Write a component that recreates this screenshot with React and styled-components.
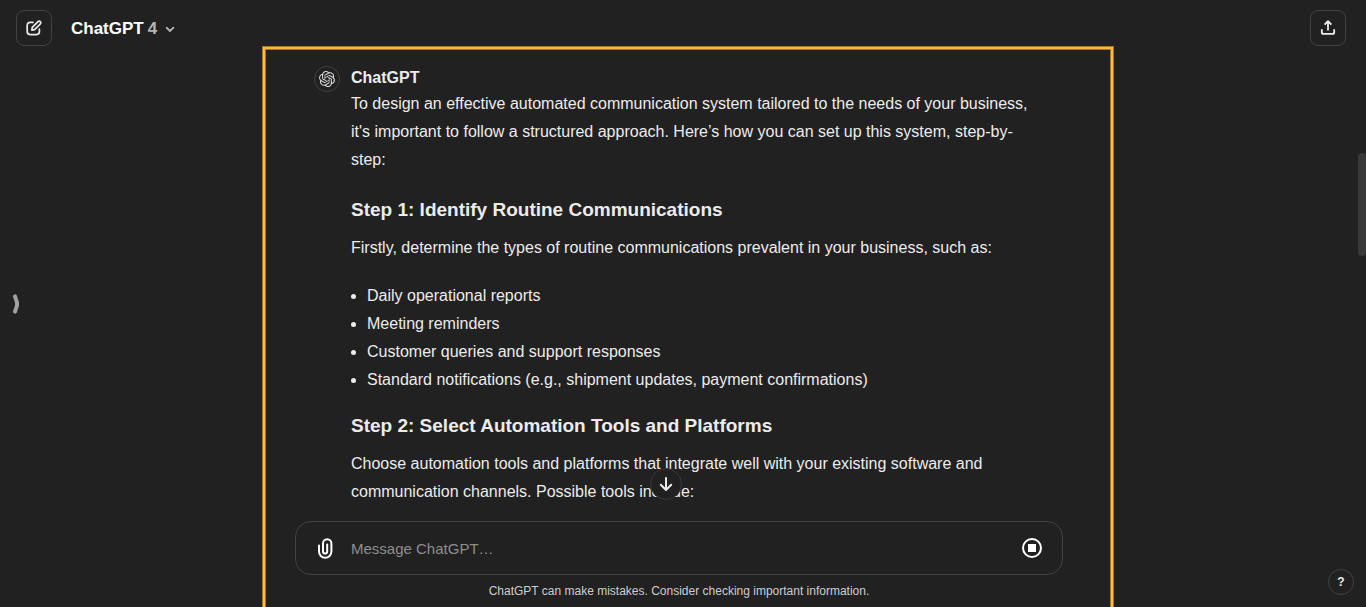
import React from 'react'
import styled, { createGlobalStyle } from 'styled-components'
import { SiOpenai } from 'react-icons/si'

const routine = [
  'Daily operational reports',
  'Meeting reminders',
  'Customer queries and support responses',
  'Standard notifications (e.g., shipment updates, payment confirmations)',
]

const EditIcon = () => (
  <svg width='18' height='18' viewBox='0 0 18 18' fill='none' stroke='currentColor' strokeWidth='1.7'>
    <path d='M8 3.4H5.2C3.2 3.4 2.2 4.4 2.2 6.4v6.2c0 2 1 3 3 3h6.2c2 0 3-1 3-3V10' strokeLinecap='round' />
    <path d='M6.8 11.2l.5-2.8 5.7-5.7a1.6 1.6 0 0 1 2.3 2.3l-5.7 5.7z' strokeLinejoin='round' />
  </svg>
)

const ShareIcon = () => (
  <svg width='18' height='18' viewBox='0 0 18 18' fill='none' stroke='currentColor' strokeWidth='1.8' strokeLinecap='round' strokeLinejoin='round'>
    <path d='M9 10.8V2.8M6.2 5L9 2.2 11.8 5' />
    <path d='M2.8 10.8v2.4c0 1.1.6 1.7 1.7 1.7h9c1.1 0 1.7-.6 1.7-1.7v-2.4' />
  </svg>
)

const ChevronIcon = () => (
  <svg width='10' height='8' viewBox='0 0 10 8' fill='none' stroke='currentColor' strokeWidth='1.8' strokeLinecap='round' strokeLinejoin='round'>
    <path d='M1.6 2.6L5 6l3.4-3.4' />
  </svg>
)

const ArrowDownIcon = () => (
  <svg width='16' height='16' viewBox='0 0 16 16' fill='none' stroke='currentColor' strokeWidth='2' strokeLinecap='round' strokeLinejoin='round'>
    <path d='M8 2v12M2.8 8.8L8 14l5.2-5.2' />
  </svg>
)

const ClipIcon = () => (
  <svg width='18' height='22' viewBox='0 0 18 22' fill='none' stroke='currentColor' strokeWidth='2' strokeLinecap='round'>
    <path d='M3 8.4v6.2a6.2 6.2 0 0 0 12.4 0V6.4a4.2 4.2 0 0 0-8.4 0v8a2.1 2.1 0 0 0 4.2 0V7.6' />
  </svg>
)

const StopIcon = () => (
  <svg width='20' height='20' viewBox='0 0 20 20' fill='none'>
    <circle cx='10' cy='10' r='9' stroke='currentColor' strokeWidth='2' />
    <rect x='6' y='6' width='8' height='8' fill='currentColor' />
  </svg>
)

const HandleIcon = () => (
  <svg width='8' height='20' viewBox='0 0 8 20' fill='none' stroke='currentColor' strokeWidth='4' strokeLinecap='round' strokeLinejoin='round'>
    <path d='M3 2.4L5 8.5v3L3 17.6' />
  </svg>
)

const App = () => {
  return (
    <Page>
      <GlobalStyle />
      <Main>
        <Header>
          <SquareButton type='button' aria-label='New chat'>
            <EditIcon />
          </SquareButton>
          <ModelButton type='button'>
            ChatGPT <span>4</span>
            <ChevronIcon />
          </ModelButton>
          <SquareButton type='button' aria-label='Share'>
            <ShareIcon />
          </SquareButton>
        </Header>

        <Column>
          <Highlight />
          <Message>
            <Avatar>
              <SiOpenai size={16} />
            </Avatar>
            <div>
              <Name>ChatGPT</Name>
              <Text>
                To design an effective automated communication system tailored to the needs of your
                business, it's important to follow a structured approach. Here’s how you can set up
                this system, step-by-step:
              </Text>
              <Title>Step 1: Identify Routine Communications</Title>
              <Text>
                Firstly, determine the types of routine communications prevalent in your business,
                such as:
              </Text>
              <List>
                {routine.map((item) => (
                  <li key={item}>{item}</li>
                ))}
              </List>
              <Title>Step 2: Select Automation Tools and Platforms</Title>
              <Text>
                Choose automation tools and platforms that integrate well with your existing
                software and communication channels. Possible tools include:
              </Text>
            </div>
          </Message>

          <Footer>
            <ScrollDown type='button' aria-label='Scroll to bottom'>
              <ArrowDownIcon />
            </ScrollDown>
            <Composer>
              <IconButton type='button' aria-label='Attach files'>
                <ClipIcon />
              </IconButton>
              <input type='text' aria-label='Message ChatGPT' placeholder='Message ChatGPT…' />
              <IconButton type='button' aria-label='Stop generating'>
                <StopIcon />
              </IconButton>
            </Composer>
            <Note>ChatGPT can make mistakes. Consider checking important information.</Note>
          </Footer>
        </Column>
      </Main>
      <Track>
        <Thumb />
      </Track>
      <SidebarToggle type='button' aria-label='Open sidebar'>
        <HandleIcon />
      </SidebarToggle>
      <HelpButton type='button'>?</HelpButton>
    </Page>
  )
}

const GlobalStyle = createGlobalStyle`
  * {
    box-sizing: border-box;
  }
  body {
    margin: 0;
    background: #212121;
    color: #ececec;
    font-family: 'Liberation Sans', Arial, sans-serif;
    font-size: 16px;
  }
  button,
  input {
    padding: 0;
    border: 0;
    background: none;
    color: inherit;
    font: inherit;
  }
  svg {
    display: block;
  }
`

const Page = styled.div`
  position: relative;
  display: flex;
  height: 100vh;
  overflow: hidden;
`

const Main = styled.main`
  flex: 1;
  min-width: 0;
  display: flex;
  flex-direction: column;
`

const Header = styled.header`
  display: flex;
  align-items: center;
  height: 56px;
  padding: 0 12px 0 16px;
`

const SquareButton = styled.button`
  display: grid;
  place-items: center;
  width: 36px;
  height: 36px;
  border: 1px solid #424242;
  border-radius: 8px;
`

const ModelButton = styled.button`
  display: flex;
  align-items: center;
  gap: 4px;
  margin: 0 auto 0 19px;
  padding-top: 2px;
  font-size: 17px;
  font-weight: 700;
  color: #fff;

  span,
  svg {
    color: #b4b4b4;
  }
  svg {
    margin-left: 4px;
  }
`

const Column = styled.div`
  position: relative;
  flex: 1;
  min-height: 0;
  display: flex;
  flex-direction: column;
  width: 100%;
  max-width: 768px;
  margin: 0 auto;
`

const Highlight = styled.div`
  position: absolute;
  inset: -9px -50px -4px -32px;
  border: 2px solid #f7b845;
  box-shadow: 0 0 0 1px #a8761f, inset 0 0 0 1px #a8761f;
  pointer-events: none;
`

const Message = styled.article`
  flex: 1;
  min-height: 0;
  overflow: hidden;
  display: flex;
  gap: 11px;
  padding: 10px 20px 0 19px;
`

const Avatar = styled.div`
  flex: none;
  display: grid;
  place-items: center;
  width: 26px;
  height: 26px;
  border: 1px solid #424242;
  border-radius: 50%;
  color: #d9d9d9;
`

const Name = styled.div`
  font-weight: 700;
  line-height: 24px;
`

const Text = styled.p`
  margin: 0;
  line-height: 28px;
`

const Title = styled.h3`
  margin: 20px 0 8px;
  font-size: 19px;
  font-weight: 700;
  line-height: 32px;
`

const List = styled.ul`
  margin: 20px 0 16px;
  padding-left: 16px;
  line-height: 28px;

  & + h3 {
    margin-top: 16px;
  }
`

const Footer = styled.footer`
  position: relative;
`

const ScrollDown = styled.button`
  position: absolute;
  top: -53px;
  left: calc(50% - 29px);
  display: grid;
  place-items: center;
  width: 32px;
  height: 32px;
  border: 1px solid #383838;
  border-radius: 50%;
  background: #212121;
`

const Composer = styled.form`
  display: flex;
  align-items: center;
  height: 54px;
  padding: 0 20px;
  border: 1px solid #424242;
  border-radius: 16px;

  input {
    flex: 1;
    min-width: 0;
    height: 24px;
    margin: 0 17px;
    font-size: 15px;
    outline: 0;
  }
  input::placeholder {
    color: #8e8e8e;
    opacity: 1;
  }
`

const IconButton = styled.button`
  color: #fff;
`

const Note = styled.div`
  font-size: 12px;
  line-height: 32px;
  text-align: center;
  color: #cdcdcd;
`

const Track = styled.div`
  width: 8px;
  padding-top: 153px;
`

const Thumb = styled.div`
  height: 103px;
  border-radius: 4px;
  background: #393939;
`

const SidebarToggle = styled.button`
  position: absolute;
  top: calc(50% - 10px);
  left: 12px;
  color: #a0a0a0;
`

const HelpButton = styled.button`
  position: absolute;
  right: 12px;
  bottom: 12px;
  width: 26px;
  height: 26px;
  border: 1px solid #424242;
  border-radius: 50%;
  font-size: 12px;
  font-weight: 700;
`

export default App
